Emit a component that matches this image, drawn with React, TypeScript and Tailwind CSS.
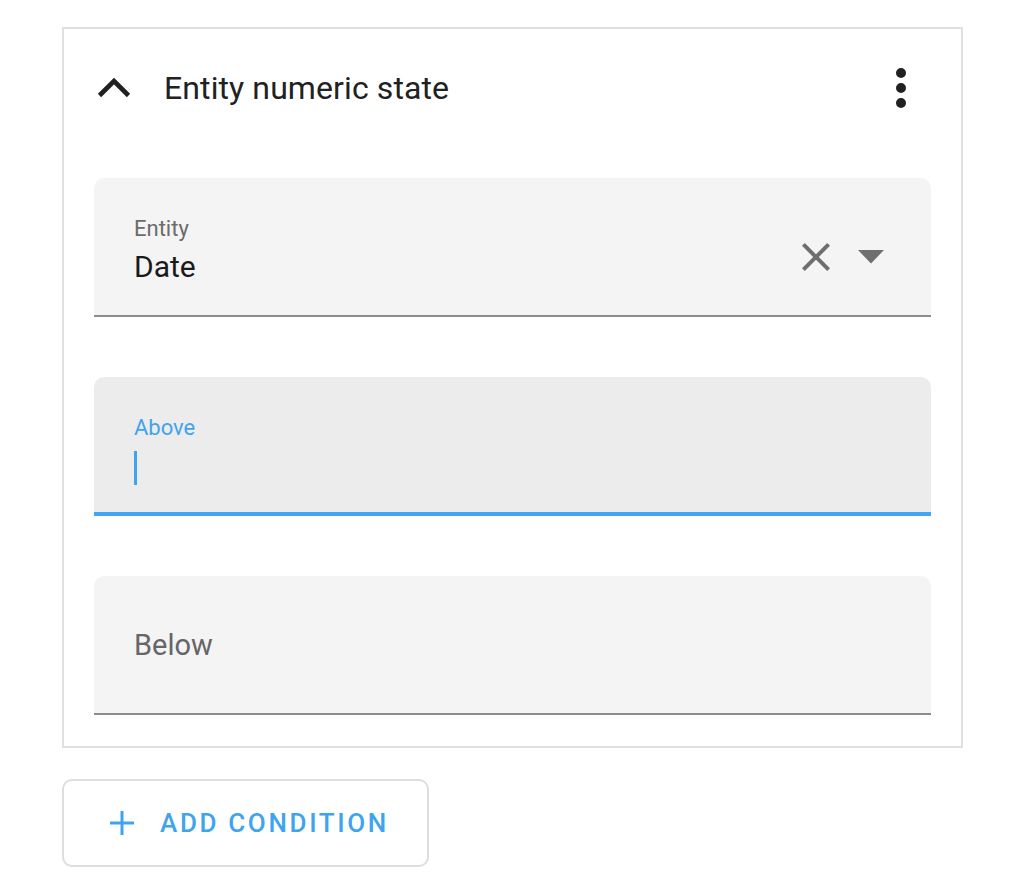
import React from 'react';

const FONT = { fontFamily: 'Roboto, "Noto Sans", Arial, sans-serif' };

function ChevronUp() {
  return (
    <svg width="34" height="20" viewBox="0 0 34 20" className="shrink-0">
      <polyline points="2.5,17.5 17,3 31.5,17.5" fill="none" stroke="#212121" strokeWidth="4.6" strokeLinejoin="miter" />
    </svg>
  );
}

function DotsVertical() {
  return (
    <svg width="60" height="60" viewBox="0 0 24 24" className="shrink-0">
      <path
        fill="#212121"
        d="M12,16A2,2 0 0,1 14,18A2,2 0 0,1 12,20A2,2 0 0,1 10,18A2,2 0 0,1 12,16M12,10A2,2 0 0,1 14,12A2,2 0 0,1 12,14A2,2 0 0,1 10,12A2,2 0 0,1 12,10M12,4A2,2 0 0,1 14,6A2,2 0 0,1 12,8A2,2 0 0,1 10,6A2,2 0 0,1 12,4Z"
      />
    </svg>
  );
}

function CloseIcon() {
  return (
    <svg width="48" height="48" viewBox="0 0 24 24" className="shrink-0">
      <path
        fill="#6f6f6f"
        d="M19,6.41L17.59,5L12,10.59L6.41,5L5,6.41L10.59,12L5,17.59L6.41,19L12,13.41L17.59,19L19,17.59L13.41,12L19,6.41Z"
      />
    </svg>
  );
}

function MenuDown() {
  return (
    <svg width="26" height="14" viewBox="0 0 26 14" className="shrink-0">
      <polygon points="0,0 26,0 13,13.5" fill="#6f6f6f" />
    </svg>
  );
}

function PlusIcon() {
  return (
    <svg width="24" height="24" viewBox="0 0 24 24" className="shrink-0">
      <path d="M12 0V24M0 12H24" stroke="#3fa4ee" strokeWidth="3" fill="none" />
    </svg>
  );
}

export default function App() {
  return (
    <div className="min-h-screen bg-white pt-[27px] pl-[62px]" style={FONT}>
      {/* Condition card */}
      <div className="w-[901px] border-2 border-[#e0e0e0] bg-white">
        {/* Header */}
        <div className="flex h-[118px] items-center pl-[33px] pr-[30px]">
          <ChevronUp />
          <div className="ml-[33px] flex-1 text-[32px] font-normal leading-none tracking-[0.1px] text-[#212121]">
            Entity numeric state
          </div>
          <DotsVertical />
        </div>

        <div className="flex flex-col gap-[60px] px-[30px] pt-[31px] pb-[31px]">
          {/* Entity picker */}
          <div className="flex h-[139px] items-start rounded-t-[10px] border-b-2 border-[#8c8c8c] bg-[#f4f4f4] pl-[40px] pr-[47px]">
            <div className="flex-1 pt-[38px]">
              <div className="text-[22px] leading-[26px] text-[#6b6b6b]">Entity</div>
              <div className="mt-[8px] text-[30px] leading-[34px] text-[#1a1a1a]">Date</div>
            </div>
            <div className="mt-[55px] flex items-center gap-[18px]">
              <CloseIcon />
              <MenuDown />
            </div>
          </div>

          {/* Above (focused) */}
          <div className="h-[139px] rounded-t-[10px] border-b-4 border-[#42a5f5] bg-[#ececec] pl-[40px] pt-[38px]">
            <div className="text-[22px] leading-[26px] text-[#3fa4ee]">Above</div>
            <div className="mt-[10px] h-[34px] w-[3px] bg-[#3fa4ee]" />
          </div>

          {/* Below */}
          <div className="flex h-[139px] items-center rounded-t-[10px] border-b-2 border-[#8c8c8c] bg-[#f4f4f4] pl-[40px]">
            <div className="text-[29px] leading-[34px] text-[#666666]">Below</div>
          </div>
        </div>
      </div>

      {/* Add condition button */}
      <button className="mt-[31px] flex h-[88px] w-[367px] items-center rounded-[10px] border-2 border-[#dedede] bg-white pl-[46px]">
        <PlusIcon />
        <span className="ml-[26px] text-[26px] font-medium leading-none tracking-[2.65px] text-[#3fa4ee]">
          ADD CONDITION
        </span>
      </button>
    </div>
  );
}
